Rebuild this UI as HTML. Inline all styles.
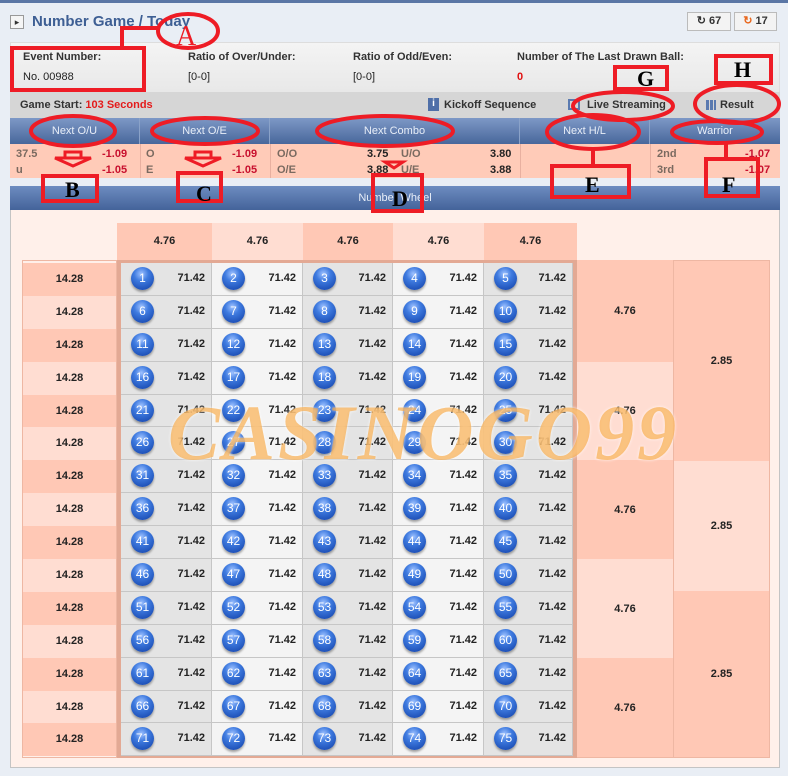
<!DOCTYPE html>
<html><head><meta charset="utf-8"><style>
*{box-sizing:border-box;margin:0;padding:0}
body{width:788px;height:776px;background:#e9eef5;font-family:"Liberation Sans",sans-serif;font-size:11px;color:#222;position:relative;overflow:hidden}
.a{position:absolute}
.topline{left:0;top:0;width:788px;height:3px;background:#5a76a5}
.title{left:32px;top:13px;font-size:15px;font-weight:bold;color:#3e5f94}
.tbtn{left:10px;top:15px;width:14px;height:14px;border:1px solid #999;background:#f5f5f5;font-size:9px;line-height:12px;text-align:center;color:#333}
.rb{top:12px;height:19px;border:1px solid #bbb;background:#f3f3f3;font-size:11px;line-height:17px;text-align:center;font-weight:bold;color:#333}
.info{left:10px;top:42px;width:770px;height:50px;background:linear-gradient(#f4f4f4,#e8e8e8);border:1px solid #ddd;border-bottom:none}
.info div{position:absolute;top:8px;font-weight:bold;color:#333}
.info span{position:absolute;top:28px;color:#222}
.gs{left:10px;top:92px;width:770px;height:26px;background:#d6d6d6}
.hdr{left:10px;top:118px;width:770px;height:26px;background:linear-gradient(#7d98c6,#48679b);color:#e8eef8;font-size:11px}
.hdr div{position:absolute;top:0;height:26px;line-height:26px;text-align:center;border-right:1px solid #8aa2c8}
.odds{left:10px;top:144px;width:770px;height:34px;background:#ffcbb8;font-weight:bold;font-size:11px}
.odds div{position:absolute}
.red{color:#c8102e}
.nw{left:10px;top:186px;width:770px;height:24px;background:linear-gradient(#6d8cc0,#44639a);color:#e8eef8;text-align:center;line-height:24px}
.panel{left:10px;top:210px;width:770px;height:558px;background:#fff0ea;border:1px solid #c4c4c4;border-top:none}
.hc{top:223px;height:37px;line-height:37px;text-align:center;font-weight:bold}
.lc{width:93px;height:32.9px;line-height:33px;text-align:center;font-weight:bold}
.grid{left:117px;top:260px;width:460px;height:498px;background:#e3a994;padding:3px 4px 3px 4px}
.row{display:flex;height:32.9px}
.c{position:relative;border-right:1px solid #c6c6c6;border-bottom:1px solid #c6c6c6}
.c:nth-child(odd){background:#e4e4e4}.c:nth-child(even){background:#f4f4f4}
.c i{position:absolute;left:10px;top:4px;width:23px;height:23px;border-radius:50%;background:radial-gradient(circle at 45% 30%,#9fc2ff 0,#3f7be0 35%,#1d4fb6 80%,#173f95 100%);color:#fff;font-style:normal;font-size:12px;line-height:22px;text-align:center;box-shadow:0 2px 2px rgba(0,0,0,.35)}
.c b{position:absolute;right:6px;top:9px;font-size:11px}
.rc{text-align:center;font-weight:bold;display:flex;align-items:center;justify-content:center;border-right:1px solid #eeb7a3}
.d{background:#ffc8b5}.l{background:#ffddd2}
.wm{left:168px;top:388px;font-size:78px;font-family:"Liberation Serif",serif;font-style:italic;font-weight:bold;color:rgba(246,160,50,.6);text-shadow:0 0 3px rgba(255,255,255,.8);letter-spacing:3px}
</style></head><body>
<div class="a topline"></div>
<div class="a tbtn">&#9656;</div>
<div class="a title">Number Game / Today</div>
<div class="a rb" style="left:687px;width:44px">↻ 67</div>
<div class="a rb" style="left:734px;width:43px"><span style="color:#e8651a">↻</span> 17</div>
<div class="a info">
<div style="left:12px">Event Number:</div><span style="left:12px">No. 00988</span>
<div style="left:177px">Ratio of Over/Under:</div><span style="left:177px">[0-0]</span>
<div style="left:342px">Ratio of Odd/Even:</div><span style="left:342px">[0-0]</span>
<div style="left:506px">Number of The Last Drawn Ball:</div><span style="left:506px;color:#e01010;font-weight:bold">0</span>
</div>
<div class="a gs">
<div class="a" style="left:10px;top:7px;font-weight:bold;color:#333">Game Start: <span style="color:#e41b1b">103 Seconds</span></div>
<div class="a" style="left:418px;top:6px;width:11px;height:13px;background:#4f6fa8;color:#fff;font-size:10px;text-align:center;font-weight:bold">i</div>
<div class="a" style="left:434px;top:7px;font-weight:bold;color:#333">Kickoff Sequence</div>
<div class="a" style="left:558px;top:7px;width:12px;height:11px;border:2px solid #5a7ab0"></div>
<div class="a" style="left:577px;top:7px;font-weight:bold;color:#333">Live Streaming</div>
<div class="a" style="left:696px;top:8px;width:10px;height:10px;background:linear-gradient(90deg,#5a7ab0 30%,transparent 30%,transparent 40%,#5a7ab0 40%,#5a7ab0 70%,transparent 70%,transparent 80%,#5a7ab0 80%)"></div>
<div class="a" style="left:710px;top:7px;font-weight:bold;color:#333">Result</div>
</div>
<div class="a hdr">
<div style="left:0;width:130px">Next O/U</div>
<div style="left:130px;width:130px">Next O/E</div>
<div style="left:260px;width:250px">Next Combo</div>
<div style="left:510px;width:130px">Next H/L</div>
<div style="left:640px;width:130px;border:none">Warrior</div>
</div>
<div class="a odds">
<div style="left:6px;top:4px;color:#7a6a60">37.5</div><div style="left:6px;top:20px;color:#7a6a60">u</div>
<div class="red" style="left:92px;top:4px">-1.09</div><div class="red" style="left:92px;top:20px">-1.05</div>
<div style="left:136px;top:4px;color:#7a6a60">O</div><div style="left:136px;top:20px;color:#7a6a60">E</div>
<div class="red" style="left:222px;top:4px">-1.09</div><div class="red" style="left:222px;top:20px">-1.05</div>
<div style="left:267px;top:4px;color:#7a6a60">O/O</div><div style="left:267px;top:20px;color:#7a6a60">O/E</div>
<div style="left:357px;top:4px">3.75</div><div style="left:357px;top:20px">3.88</div>
<div style="left:391px;top:4px;color:#7a6a60">U/O</div><div style="left:391px;top:20px;color:#7a6a60">U/E</div>
<div style="left:480px;top:4px">3.80</div><div style="left:480px;top:20px">3.88</div>
<div style="left:647px;top:4px;color:#7a6a60">2nd</div><div style="left:647px;top:20px;color:#7a6a60">3rd</div>
<div class="red" style="left:735px;top:4px">-1.07</div><div class="red" style="left:735px;top:20px">-1.07</div>
<div style="left:130px;top:0;width:1px;height:34px;background:#e8b0a0"></div>
<div style="left:260px;top:0;width:1px;height:34px;background:#e8b0a0"></div>
<div style="left:510px;top:0;width:1px;height:34px;background:#e8b0a0"></div>
<div style="left:640px;top:0;width:1px;height:34px;background:#e8b0a0"></div>
</div>
<div class="a nw">Number Wheel</div>
<div class="a panel"></div>
<div class="a hc d" style="left:117px;width:95px">4.76</div>
<div class="a hc l" style="left:212px;width:91px">4.76</div>
<div class="a hc d" style="left:303px;width:90px">4.76</div>
<div class="a hc l" style="left:393px;width:91px">4.76</div>
<div class="a hc d" style="left:484px;width:93px">4.76</div>
<div class="a" style="left:22px;top:260px;width:95px;height:498px;border:1px solid #eeb7a3;padding-top:2px">
<div class="lc d">14.28</div><div class="lc l">14.28</div><div class="lc d">14.28</div><div class="lc l">14.28</div><div class="lc d">14.28</div><div class="lc l">14.28</div><div class="lc d">14.28</div><div class="lc l">14.28</div><div class="lc d">14.28</div><div class="lc l">14.28</div><div class="lc d">14.28</div><div class="lc l">14.28</div><div class="lc d">14.28</div><div class="lc l">14.28</div><div class="lc d">14.28</div>
</div>
<div class="a grid">
<div class="row"><div class="c" style="width:91px"><i>1</i><b>71.42</b></div><div class="c" style="width:91px"><i>2</i><b>71.42</b></div><div class="c" style="width:90px"><i>3</i><b>71.42</b></div><div class="c" style="width:91px"><i>4</i><b>71.42</b></div><div class="c" style="width:89px"><i>5</i><b>71.42</b></div></div>
<div class="row"><div class="c" style="width:91px"><i>6</i><b>71.42</b></div><div class="c" style="width:91px"><i>7</i><b>71.42</b></div><div class="c" style="width:90px"><i>8</i><b>71.42</b></div><div class="c" style="width:91px"><i>9</i><b>71.42</b></div><div class="c" style="width:89px"><i>10</i><b>71.42</b></div></div>
<div class="row"><div class="c" style="width:91px"><i>11</i><b>71.42</b></div><div class="c" style="width:91px"><i>12</i><b>71.42</b></div><div class="c" style="width:90px"><i>13</i><b>71.42</b></div><div class="c" style="width:91px"><i>14</i><b>71.42</b></div><div class="c" style="width:89px"><i>15</i><b>71.42</b></div></div>
<div class="row"><div class="c" style="width:91px"><i>16</i><b>71.42</b></div><div class="c" style="width:91px"><i>17</i><b>71.42</b></div><div class="c" style="width:90px"><i>18</i><b>71.42</b></div><div class="c" style="width:91px"><i>19</i><b>71.42</b></div><div class="c" style="width:89px"><i>20</i><b>71.42</b></div></div>
<div class="row"><div class="c" style="width:91px"><i>21</i><b>71.42</b></div><div class="c" style="width:91px"><i>22</i><b>71.42</b></div><div class="c" style="width:90px"><i>23</i><b>71.42</b></div><div class="c" style="width:91px"><i>24</i><b>71.42</b></div><div class="c" style="width:89px"><i>25</i><b>71.42</b></div></div>
<div class="row"><div class="c" style="width:91px"><i>26</i><b>71.42</b></div><div class="c" style="width:91px"><i>27</i><b>71.42</b></div><div class="c" style="width:90px"><i>28</i><b>71.42</b></div><div class="c" style="width:91px"><i>29</i><b>71.42</b></div><div class="c" style="width:89px"><i>30</i><b>71.42</b></div></div>
<div class="row"><div class="c" style="width:91px"><i>31</i><b>71.42</b></div><div class="c" style="width:91px"><i>32</i><b>71.42</b></div><div class="c" style="width:90px"><i>33</i><b>71.42</b></div><div class="c" style="width:91px"><i>34</i><b>71.42</b></div><div class="c" style="width:89px"><i>35</i><b>71.42</b></div></div>
<div class="row"><div class="c" style="width:91px"><i>36</i><b>71.42</b></div><div class="c" style="width:91px"><i>37</i><b>71.42</b></div><div class="c" style="width:90px"><i>38</i><b>71.42</b></div><div class="c" style="width:91px"><i>39</i><b>71.42</b></div><div class="c" style="width:89px"><i>40</i><b>71.42</b></div></div>
<div class="row"><div class="c" style="width:91px"><i>41</i><b>71.42</b></div><div class="c" style="width:91px"><i>42</i><b>71.42</b></div><div class="c" style="width:90px"><i>43</i><b>71.42</b></div><div class="c" style="width:91px"><i>44</i><b>71.42</b></div><div class="c" style="width:89px"><i>45</i><b>71.42</b></div></div>
<div class="row"><div class="c" style="width:91px"><i>46</i><b>71.42</b></div><div class="c" style="width:91px"><i>47</i><b>71.42</b></div><div class="c" style="width:90px"><i>48</i><b>71.42</b></div><div class="c" style="width:91px"><i>49</i><b>71.42</b></div><div class="c" style="width:89px"><i>50</i><b>71.42</b></div></div>
<div class="row"><div class="c" style="width:91px"><i>51</i><b>71.42</b></div><div class="c" style="width:91px"><i>52</i><b>71.42</b></div><div class="c" style="width:90px"><i>53</i><b>71.42</b></div><div class="c" style="width:91px"><i>54</i><b>71.42</b></div><div class="c" style="width:89px"><i>55</i><b>71.42</b></div></div>
<div class="row"><div class="c" style="width:91px"><i>56</i><b>71.42</b></div><div class="c" style="width:91px"><i>57</i><b>71.42</b></div><div class="c" style="width:90px"><i>58</i><b>71.42</b></div><div class="c" style="width:91px"><i>59</i><b>71.42</b></div><div class="c" style="width:89px"><i>60</i><b>71.42</b></div></div>
<div class="row"><div class="c" style="width:91px"><i>61</i><b>71.42</b></div><div class="c" style="width:91px"><i>62</i><b>71.42</b></div><div class="c" style="width:90px"><i>63</i><b>71.42</b></div><div class="c" style="width:91px"><i>64</i><b>71.42</b></div><div class="c" style="width:89px"><i>65</i><b>71.42</b></div></div>
<div class="row"><div class="c" style="width:91px"><i>66</i><b>71.42</b></div><div class="c" style="width:91px"><i>67</i><b>71.42</b></div><div class="c" style="width:90px"><i>68</i><b>71.42</b></div><div class="c" style="width:91px"><i>69</i><b>71.42</b></div><div class="c" style="width:89px"><i>70</i><b>71.42</b></div></div>
<div class="row"><div class="c" style="width:91px"><i>71</i><b>71.42</b></div><div class="c" style="width:91px"><i>72</i><b>71.42</b></div><div class="c" style="width:90px"><i>73</i><b>71.42</b></div><div class="c" style="width:91px"><i>74</i><b>71.42</b></div><div class="c" style="width:89px"><i>75</i><b>71.42</b></div></div>
</div>
<div class="a" style="left:577px;top:260px;width:97px;height:498px;border-bottom:1px solid #eeb7a3">
<div class="rc d" style="height:102px">4.76</div><div class="rc l" style="height:98px">4.76</div><div class="rc d" style="height:99px">4.76</div><div class="rc l" style="height:99px">4.76</div><div class="rc d" style="height:99px">4.76</div>
</div>
<div class="a" style="left:674px;top:260px;width:96px;height:498px;border:1px solid #eeb7a3;border-left:none">
<div class="rc d" style="height:200px;border:none">2.85</div><div class="rc l" style="height:130px;border:none">2.85</div><div class="rc d" style="height:166px;border:none">2.85</div>
</div>
<div class="a wm">CASINOGO99</div>
<svg class="a" style="left:0;top:0" width="788" height="776" fill="none" stroke="#ee1c25" stroke-width="4">
<ellipse cx="188" cy="31" rx="30" ry="17"/>
<text x="176" y="45" font-family="Liberation Serif" font-size="28" fill="#ee1c25" stroke="none">A</text>
<polyline points="122,47 122,28 160,28"/>
<rect x="12" y="48" width="132" height="42"/>
<ellipse cx="73" cy="131" rx="42" ry="15"/>
<ellipse cx="205" cy="131" rx="53" ry="13"/>
<ellipse cx="385" cy="131" rx="68" ry="15"/>
<ellipse cx="593" cy="132" rx="46" ry="17"/>
<ellipse cx="717" cy="132" rx="45" ry="11"/>
<ellipse cx="623" cy="106" rx="50" ry="14"/>
<ellipse cx="737" cy="104" rx="42" ry="19"/>
<path d="M55 158h36l-18 8z M65 158v-6h16v6" stroke-width="3"/>
<path d="M185 158h36l-18 8z M195 158v-6h16v6" stroke-width="3"/>
<path d="M385 162h18l-9 6z" stroke-width="3"/>
<line x1="593" y1="150" x2="593" y2="166"/>
<line x1="726" y1="143" x2="726" y2="158"/>
<rect x="43" y="176" width="54" height="25"/>
<rect x="178" y="173" width="43" height="28"/>
<rect x="373" y="175" width="49" height="36"/>
<rect x="552" y="166" width="77" height="31"/>
<rect x="706" y="159" width="52" height="37"/>
<rect x="615" y="67" width="52" height="22"/>
<rect x="716" y="56" width="55" height="27"/>
<g fill="#000" stroke="none" font-family="Liberation Serif" font-weight="bold" font-size="22">
<text x="65" y="197">B</text><text x="196" y="201">C</text><text x="392" y="206">D</text>
<text x="585" y="192">E</text><text x="722" y="192">F</text><text x="637" y="86">G</text><text x="734" y="77">H</text>
</g>
</svg>
</body></html>
